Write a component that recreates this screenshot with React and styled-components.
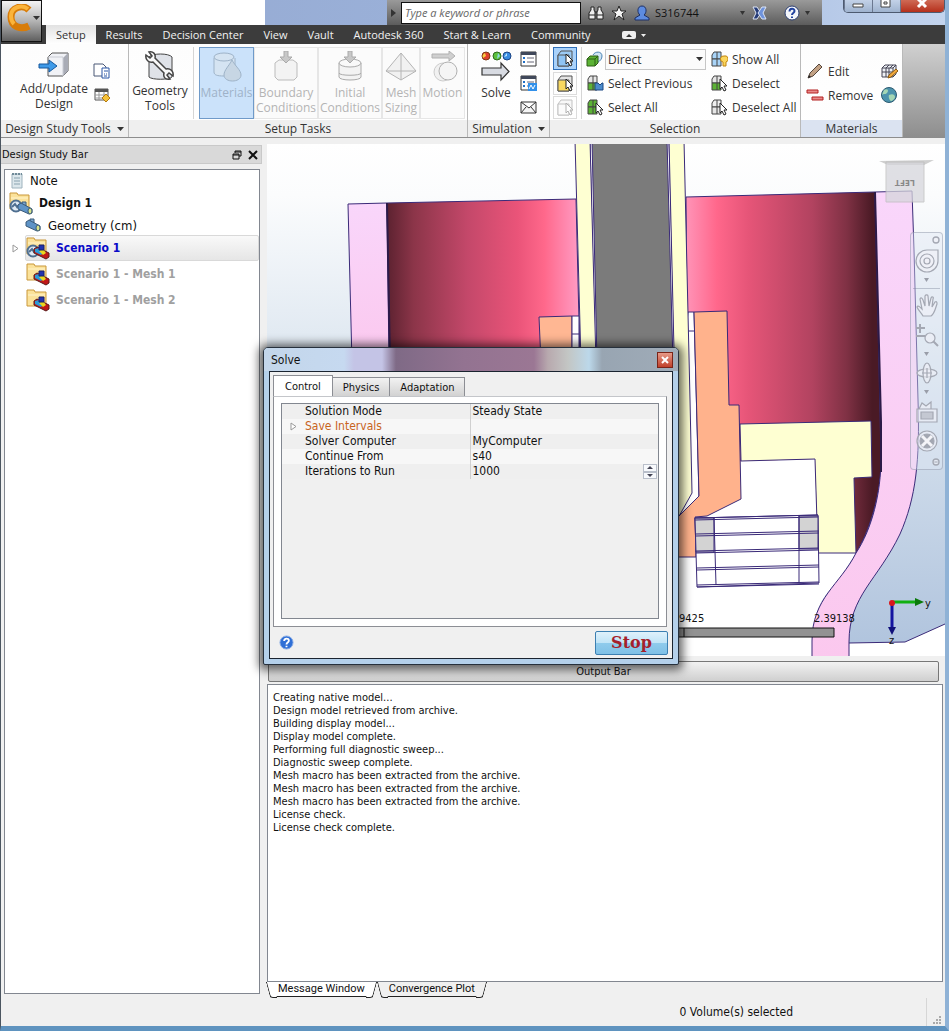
import { useState } from "react";
import styled, { createGlobalStyle } from "styled-components";

const GlobalStyle = createGlobalStyle`
  * {
    box-sizing: border-box;
  }
  body {
    margin: 0;
    background: #f0f0f0;
    font-family: "Open Sans", "Noto Sans", sans-serif;
    font-size: 12px;
    color: #333;
  }
  button, input, select {
    font: inherit;
    color: inherit;
    margin: 0;
    padding: 0;
    border: 0;
    border-radius: 0;
    background: none;
  }
  svg {
    display: block;
    flex: none;
  }
`;

const tahoma = `"DejaVu Sans Condensed", "DejaVu Sans", sans-serif`;

const Window = styled.div`
  position: relative;
  display: flex;
  flex-direction: column;
  min-height: 100vh;
  border-left: 1px solid #4b5560;
  border-right: 4px solid #8fb2d6;
  border-bottom: 5px solid #5f93bf;
  background: #f0f0f0;
`;

/* ---------- title bar and tabs ---------- */

const Header = styled.header`
  display: grid;
  grid-template-columns: 41px 1fr;
  grid-template-rows: 25px 19px;
  background: #3c3c3c;
`;

const AppButton = styled.button`
  grid-row: 1 / 3;
  height: 42px;
  display: flex;
  align-items: center;
  justify-content: space-between;
  padding: 0 2px 6px 5px;
  border: 1px solid #111;
  background: linear-gradient(#f4f4f4, #b4b4b4 50%, #5f5f5f);
`;

const TitleBar = styled.div`
  display: flex;
  background: linear-gradient(90deg, #94a8d0, #9db4dc 60%, #c3d4ee);
`;

const QuickAccess = styled.div`
  flex: 0 0 223px;
  background: #fff;
`;

const TitleDrag = styled.div`
  flex: ${(p) => p.$grow || 0} 0 ${(p) => p.$size}px;
`;

const InfoCenter = styled.div`
  flex: 0 0 435px;
  display: flex;
  align-items: center;
  gap: 7px;
  padding-left: 4px;
  color: #111;
  background: linear-gradient(#9a9a9a, #5c5c5c);
`;

const Search = styled.input`
  width: 180px;
  height: 22px;
  margin-left: -2px;
  padding: 0 3px;
  border: 1px solid #111;
  background: #fff;
  font-size: 11px;
  font-style: italic;
  &::placeholder {
    color: #666;
    opacity: 1;
  }
`;

const InfoButton = styled.button`
  display: flex;
  align-items: center;
  gap: 5px;
  height: 22px;
  margin-right: ${(p) => p.$after || 0}px;
  font-size: 11px;
`;

const WindowControls = styled.div`
  display: flex;
  align-self: flex-start;
  width: 102px;
  height: 13px;
  border: 1px solid #4d5a70;
  border-top: 0;
  border-radius: 0 0 5px 5px;
  overflow: hidden;
`;

const ControlButton = styled.button`
  flex: ${(p) => (p.$close ? 45 : 28)};
  display: flex;
  justify-content: center;
  border-left: 1px solid #6b7890;
  background: ${(p) =>
    p.$close
      ? "linear-gradient(#cf6a55, #b5301c)"
      : "linear-gradient(#c3d2e8, #9fb3cf)"};
`;

const Tabs = styled.nav`
  display: flex;
  align-items: flex-start;
  padding-left: 4px;
  color: #f2f2f2;
  font-size: 11px;
`;

const Tab = styled.button`
  height: 19px;
  padding: 0 10px;
  line-height: 19px;
  ${(p) =>
    p.$active &&
    "background: linear-gradient(#e2e2e2, #fff); color: #333;"}
`;

/* ---------- ribbon ---------- */

const Ribbon = styled.section`
  display: flex;
  height: 94px;
  border-bottom: 1px solid #8d8d8d;
  background: linear-gradient(#d0d0d0, #8e8e8e);
`;

const Group = styled.div`
  flex: 0 0 ${(p) => p.$width}px;
  min-width: 0;
  display: flex;
  flex-direction: column;
  border-right: 1px solid #b9b9b9;
  background: linear-gradient(#fdfdfd, #fff);
`;

const GroupBody = styled.div`
  flex: 1;
  display: flex;
  padding: 3px 0 0 ${(p) => p.$indent || 3}px;
  gap: ${(p) => p.$gap || 0}px;
`;

const GroupTitle = styled.div`
  display: flex;
  align-items: center;
  justify-content: center;
  gap: 6px;
  height: 17px;
  background: ${(p) => (p.$accent ? "#dbe3f1" : "#efefef")};
`;

const BigButton = styled.button`
  flex: none;
  width: ${(p) => p.$width}px;
  height: 72px;
  display: flex;
  flex-direction: column;
  align-items: center;
  gap: 2px;
  padding-top: 3px;
  line-height: 15px;
  border: 1px solid transparent;
  &:disabled {
    color: #b4b4b4;
    border-color: #e6e6e6;
    background: #fbfbfb;
  }
  ${(p) =>
    p.$selected &&
    `&:disabled {
      color: #9fb2c8;
      border-color: #6f9ac9;
      background: #cbe2fa;
    }`}
`;

const IconColumn = styled.div`
  flex: none;
  display: flex;
  flex-direction: column;
  align-items: center;
  justify-content: ${(p) => (p.$spread ? "space-between" : "center")};
  gap: ${(p) => p.$gap || 0}px;
  width: ${(p) => p.$width}px;
  height: 72px;
`;

const IconButton = styled.button`
  display: flex;
  align-items: center;
  justify-content: center;
  width: 24px;
  height: ${(p) => p.$height || 20}px;
  border: 1px solid ${(p) => (p.$active ? "#2f6fb8" : p.$framed ? "#dcdcdc" : "transparent")};
  background: ${(p) => (p.$active ? "#a9d2fb" : "none")};
  &:disabled svg {
    opacity: 0.35;
  }
`;

const Divider = styled.div`
  width: 1px;
  height: 72px;
  background: #d5d5d5;
`;

const CommandColumn = styled.div`
  flex: none;
  display: flex;
  flex-direction: column;
  justify-content: ${(p) => (p.$center ? "center" : "flex-start")};
  width: ${(p) => p.$width}px;
  height: 72px;
`;

const Command = styled.button`
  display: flex;
  align-items: center;
  gap: 4px;
  height: 24px;
  white-space: nowrap;
`;

const SelectRow = styled.div`
  display: flex;
  align-items: center;
  gap: 1px;
  height: 24px;
`;

const SelectBox = styled.div`
  flex: 1;
  display: flex;
  align-items: center;
  height: 21px;
  padding: 0 2px;
  border: 1px solid #c6c6c6;
  background: #fbfbfb;
`;

const Select = styled.select`
  appearance: none;
  flex: 1;
  min-width: 0;
`;

/* ---------- work area ---------- */

const Main = styled.main`
  flex: 1;
  display: flex;
`;

const StudyBar = styled.aside`
  flex: 0 0 261px;
  display: flex;
  flex-direction: column;
  gap: 5px;
  padding: 7px 0 0;
  font-family: ${tahoma};
  color: #111;
`;

const PanelTitle = styled.div`
  display: flex;
  align-items: center;
  height: 19px;
  padding: 0 3px 0 1px;
  gap: 6px;
  border: 1px solid #c9c9c9;
  border-left: 0;
  background: #d9d9d9;
  font-size: 11px;
`;

const PanelName = styled.h2`
  flex: 1;
  margin: 0;
  font-size: 11px;
  font-weight: 400;
`;

const Tree = styled.ul`
  flex: 1;
  margin: 0 2px 4px 3px;
  padding: 0;
  list-style: none;
  border: 1px solid #828790;
  background: #fff;
`;

const TreeRow = styled.li`
  display: flex;
  align-items: center;
  gap: 6px;
  height: ${(p) => p.$height}px;
  padding-left: ${(p) => p.$indent}px;
  font-size: ${(p) => (p.$bold ? 12 : 13)}px;
  font-weight: ${(p) => (p.$bold ? 700 : 400)};
  color: ${(p) => p.$color || "#111"};
`;

const TreeSelection = styled.div`
  flex: 1;
  display: flex;
  align-items: center;
  gap: 6px;
  height: 26px;
  border: 1px solid #d9d9d9;
  border-radius: 2px;
  background: linear-gradient(#f9f9f9, #e6e6e6);
`;

const Workspace = styled.div`
  flex: 1;
  min-width: 0;
  display: flex;
  flex-direction: column;
  padding: 6px 0 0 5px;
`;

const Viewport = styled.div`
  position: relative;
  background: #fff;
`;

const NavBar = styled.div`
  position: absolute;
  top: 88px;
  right: 2px;
  width: 33px;
  height: 238px;
  display: flex;
  flex-direction: column;
  align-items: center;
  justify-content: space-between;
  padding: 3px 2px;
  border: 1px solid rgba(120, 130, 150, 0.4);
  border-radius: 4px;
  background: rgba(225, 232, 245, 0.4);
`;

const NavButton = styled.button`
  display: flex;
  align-self: ${(p) => (p.$corner ? "flex-end" : "center")};
`;

const NavRule = styled.hr`
  width: 100%;
  margin: 0;
  border: 0;
  border-top: 1px solid rgba(120, 130, 150, 0.4);
`;

const OutputTitle = styled.h2`
  display: flex;
  align-items: center;
  justify-content: center;
  height: 21px;
  margin: 5px 6px 2px 1px;
  border: 1px solid #777;
  border-radius: 2px;
  background: linear-gradient(#f2f2f2, #cfcfcf);
  font: 400 11px ${tahoma};
  color: #111;
`;

const Log = styled.div`
  flex: 1;
  margin-right: 2px;
  padding: 6px 5px;
  border: 1px solid #828790;
  background: #fff;
  font-family: ${tahoma};
  font-size: 11px;
  line-height: 13px;
  color: #111;
`;

const OutputTabs = styled.div`
  display: flex;
  gap: 8px;
  height: 16px;
  padding-left: 3px;
`;

const OutputTab = styled.button`
  position: relative;
  height: 15px;
  padding: 0 8px;
  border-bottom: 1px solid #222;
  background: ${(p) => (p.$active ? "#fff" : "#f0f0f0")};
  font-family: Roboto, sans-serif;
  font-size: 11px;
  line-height: 14px;
  color: #111;

  &::before,
  &::after {
    content: "";
    position: absolute;
    top: 0;
    width: 6px;
    height: 15px;
    border-bottom: 1px solid #222;
    background: inherit;
  }
  &::before {
    left: -2px;
    border-left: 1px solid #222;
    border-bottom-left-radius: 3px;
    transform: skewX(15deg);
  }
  &::after {
    right: -2px;
    border-right: 1px solid #222;
    border-bottom-right-radius: 3px;
    transform: skewX(-15deg);
  }
`;

const StatusBar = styled.footer`
  display: flex;
  align-items: center;
  justify-content: flex-end;
  gap: 133px;
  height: 28px;
  padding-right: 2px;
  font-family: ${tahoma};
  color: #111;
`;

const Grip = styled.div`
  align-self: stretch;
  display: flex;
  align-items: flex-end;
  width: 17px;
  padding: 0 0 2px 5px;
  border-left: 1px solid #d6d6d6;
`;

/* ---------- solve dialog ---------- */

const Dialog = styled.div`
  position: absolute;
  top: 347px;
  left: 262px;
  width: 416px;
  border: 1px solid #26303c;
  border-radius: 5px 5px 2px 2px;
  padding: 0 5px 5px;
  background: #b4d0ea;
  box-shadow: 0 1px 10px 4px rgba(0, 0, 0, 0.6);
  font-family: ${tahoma};
  color: #111;
`;

const DialogTitle = styled.div`
  display: flex;
  align-items: center;
  justify-content: space-between;
  height: 23px;
  margin: 0 -5px;
  padding: 0 5px 0 7px;
  border-radius: 4px 4px 0 0;
  background: linear-gradient(
    90deg,
    #c3d6ea 0,
    #c6d9f0 80px,
    #c4c4e6 90px,
    #c4c4e6 118px,
    #7f6a86 132px,
    #937391 200px,
    #9b7794 270px,
    #b8a9ae 284px,
    #c3c6c4 304px,
    #bcd8ea 325px,
    #98a5b2 338px,
    #a0acb8 100%
  );
`;

const DialogClose = styled.button`
  display: flex;
  align-items: center;
  justify-content: center;
  width: 16px;
  height: 16px;
  border: 1px solid #7a2418;
  background: linear-gradient(#e79a88, #c0402a);
`;

const DialogBody = styled.div`
  display: flex;
  flex-direction: column;
  padding: 3px 5px 0 3px;
  border: 1px solid #1a2430;
  background: #f0f0f0;
`;

const DialogTabs = styled.div`
  display: flex;
  align-items: flex-end;
  height: 21px;
  font-size: 11px;
`;

const DialogTab = styled.button`
  height: ${(p) => (p.$active ? 21 : 19)}px;
  padding: 0 ${(p) => (p.$active ? 11 : 10)}px;
  border: 1px solid #8c8e94;
  border-bottom: 0;
  border-left-width: ${(p) => (p.$first ? 1 : 0)}px;
  background: ${(p) =>
    p.$active ? "#fff" : "linear-gradient(#f2f2f2, #d2d2d2)"};
`;

const Pane = styled.div`
  height: 231px;
  padding: 6px 7px 7px;
  border: 1px solid #8c8e94;
  border-top-color: #c4c6ca;
  background: #fff;
`;

const PropertyBox = styled.div`
  height: 100%;
  border: 1px solid #828790;
  background: #f0f0f0;
`;

const PropertyTable = styled.table`
  width: 100%;
  border-collapse: collapse;
  table-layout: fixed;
`;

const PropertyRow = styled.tr`
  height: 15px;
  background: ${(p) => (p.$alt ? "#f7f7f7" : "#efefef")};
`;

const PropertyName = styled.th`
  position: relative;
  width: 188px;
  padding: 0 0 0 23px;
  font-weight: 400;
  line-height: 15px;
  text-align: left;
  border-right: 1px solid #d0d0d0;
  color: ${(p) => (p.$warn ? "#c8641e" : "#111")};
`;

const Expander = styled.button`
  position: absolute;
  top: 3px;
  left: 8px;
`;

const PropertyValue = styled.td`
  padding: 0 1px 0 2px;
  line-height: 15px;
`;

const SpinField = styled.div`
  display: flex;
  justify-content: space-between;
  height: 15px;
`;

const SpinInput = styled.input`
  width: 120px;
  height: 15px;
`;

const SpinButtons = styled.div`
  display: flex;
  flex-direction: column;
  width: 14px;
  height: 15px;
`;

const SpinButton = styled.button`
  flex: 1;
  display: flex;
  align-items: center;
  justify-content: center;
  border: 1px solid #b9bfca;
  background: #f7f9fc;
`;

const DialogFooter = styled.div`
  display: flex;
  align-items: center;
  justify-content: space-between;
  height: 31px;
  margin-right: -1px;
  padding-left: 6px;
`;

const StopButton = styled.button`
  width: 73px;
  height: 24px;
  border: 1px solid #3c7fb1;
  border-radius: 2px;
  background: linear-gradient(#dff1fb, #c0e4f7 50%, #8fcbec 51%, #7fc0e6);
  font-family: "DejaVu Serif", serif;
  font-weight: 700;
  font-size: 16px;
  line-height: 20px;
  color: #a51f2c;
`;

/* ---------- icons ---------- */

const Caret = ({ color = "#333", size = 7 }) => (
  <svg width={size} height="4" viewBox="0 0 8 4" preserveAspectRatio="none">
    <path d="M0 0h8L4 4z" fill={color} />
  </svg>
);

const LogoIcon = () => (
  <svg width="26" height="28" viewBox="0 0 26 28">
    <path
      d="M22 6C16 0 4 3 4 13c0 10 10 13 18 9"
      fill="none"
      stroke="#d87c08"
      strokeWidth="7"
    />
    <path
      d="M21 5C15 0 4 3 4 12c0 4 1 6 3 8"
      fill="none"
      stroke="#fbb43a"
      strokeWidth="4"
    />
  </svg>
);

const BinocularsIcon = () => (
  <svg width="16" height="16" viewBox="0 0 16 16" fill="#eee" stroke="#222">
    <path d="M3 2h3v3l1 2v7H1V8l2-3zM10 2h3v3l2 3v6H9V7l1-2z" />
    <path d="M1 10h6M9 10h6M7 7h2" />
  </svg>
);

const StarIcon = () => (
  <svg width="16" height="16" viewBox="0 0 16 16">
    <path
      d="M8 1l2 5h5l-4 3 2 6-5-4-5 4 2-6-4-3h5z"
      fill="#f5f5f5"
      stroke="#222"
    />
  </svg>
);

const UserIcon = () => (
  <svg width="16" height="16" viewBox="0 0 16 16">
    <path
      d="M8 1c5 0 5 7 2 9l5 3v2H1v-2l5-3C3 8 3 1 8 1z"
      fill="#5d8be0"
      stroke="#1c2f66"
    />
  </svg>
);

const ExchangeIcon = () => (
  <svg width="15" height="14" viewBox="0 0 15 14">
    <path d="M1 1h4l4 6-4 6H1l3-6z" fill="#263c78" stroke="#dde5f5" />
    <path d="M14 1h-4L6 7l4 6h4l-3-6z" fill="#6f93dc" stroke="#dde5f5" />
  </svg>
);

const HelpIcon = ({ blue, size = 16 }) => (
  <svg width={size} height={size} viewBox="0 0 16 16">
    <circle
      cx="8"
      cy="8"
      r="7"
      fill={blue ? "#2f6fd6" : "#f4f6fb"}
      stroke={blue ? "#8fb0e6" : "#2c3e70"}
    />
    <path
      d="M5.500 6.500C5.500 3 10.500 3 10.500 6c0 2-2.500 2-2.500 4M8 11.500v1.500"
      fill="none"
      stroke={blue ? "#fff" : "#2243a0"}
      strokeWidth="2"
    />
  </svg>
);

const AddUpdateIcon = () => (
  <svg width="32" height="28" viewBox="0 0 32 28">
    <path d="M10 6l4-4h16v18l-5 5H10z" fill="#f1f2f6" stroke="#555" />
    <path d="M25 7l5-5v18l-5 5z" fill="#a9acb6" />
    <path d="M10 6h15v19" fill="none" stroke="#c9ccd4" />
    <path
      d="M1 13h10V9l8 6-8 6v-4H1z"
      fill="#3f9ae8"
      stroke="#17599e"
    />
  </svg>
);

const GeometryToolsIcon = () => (
  <svg width="32" height="30" viewBox="0 0 32 30">
    <path
      d="M5 6c3-4 20-4 23 0v20c-3 3-20 3-23 0z"
      stroke="#444"
      fill="#dfe2e8"
    />
    <path
      d="M2 4l4 3 2-2-3-4c4-1 7 2 6 6l11 11c4-1 8 2 7 7l-4-3-2 2 3 4c-5 1-7-2-6-6L9 11C5 12 1 9 2 4z"
      fill="#f8f8f8"
      stroke="#444"
      strokeWidth="1.500"
    />
  </svg>
);

const MaterialsIcon = () => (
  <svg width="32" height="32" viewBox="0 0 32 32">
    <g stroke="#9eb3c8" fill="#d5e4f2">
      <path d="M3 7v14c0 3 3 4 10 4s11-1 11-4V7" />
      <ellipse cx="13" cy="6" rx="10" ry="4" />
      <path d="M21 9c3 6 9 10 9 15 0 8-17 8-17 0 0-5 5-9 8-15z" fill="#c7d6e4" />
    </g>
  </svg>
);

const BoundaryIcon = () => (
  <svg width="32" height="32" viewBox="0 0 32 32">
    <path
      d="M5 12l4-3h14l4 3v14l-3 3H8l-3-3z"
      stroke="#bbb"
      fill="#f3f3f3"
    />
    <path d="M14 0h4v6h4l-6 6-6-6h4z" fill="#c8c8c8" stroke="#aaa" />
  </svg>
);

const InitialIcon = () => (
  <svg width="32" height="32" viewBox="0 0 32 32">
    <path d="M5 12v14c0 4 22 4 22 0V12" stroke="#aaa" fill="#f3f3f3" />
    <ellipse cx="16" cy="12" rx="11" ry="4" stroke="#aaa" fill="#f9f9f9" />
    <path d="M5 22c0 3 22 3 22 0" stroke="#aaa" fill="none" />
    <path d="M14 0h4v6h4l-6 6-6-6h4z" fill="#c8c8c8" stroke="#aaa" />
  </svg>
);

const MeshIcon = () => (
  <svg width="32" height="32" viewBox="0 0 32 32">
    <path
      d="M16 2L1 20l15 9 15-9zM16 2v27M1 20h30"
      stroke="#b4b4b4"
      fill="#f1f1f1"
      strokeLinejoin="round"
    />
  </svg>
);

const MotionIcon = () => (
  <svg width="32" height="32" viewBox="0 0 32 32">
    <path d="M5 3h17V0l6 5-6 5V7H5z" fill="#cfcfcf" stroke="#b0b0b0" />
    <circle cx="16" cy="21" r="9" fill="#f1f1f1" stroke="#ccc" />
    <circle cx="21" cy="20" r="9" fill="#f5f5f5" stroke="#b0b0b0" />
  </svg>
);

const SolveIcon = () => (
  <svg width="32" height="32" viewBox="0 0 32 32">
    <circle cx="6" cy="5" r="4" fill="#e0402c" stroke="#7a3a10" />
    <circle cx="17" cy="5" r="4" fill="#5cc13c" stroke="#2c6a1c" />
    <circle cx="27" cy="5" r="4" fill="#3a8ce0" stroke="#1c4484" />
    <path d="M5 2a4 4 0 0 0-2 5l3-2z" fill="#f8d040" />
    <path d="M18 2l2 3-3 3z" fill="#8fd8e8" />
    <path d="M27 2l-3 4 3-1z" fill="#bfe4fb" />
    <path
      d="M2 17h19v-5l8 8.500-8 8.500v-5H2z"
      fill="#d8dbe2"
      stroke="#333"
      strokeWidth="1.200"
    />
  </svg>
);

const DocIcon = ({ variant }) => (
  <svg width="18" height="18" viewBox="0 0 18 18">
    {variant === "page" && (
      <g stroke="#4a5876" fill="#fff">
        <path d="M1 2h9l3 3v9H1z" />
        <path d="M9 6h7v10H9z" stroke="#2b57a5" />
        <path d="M11 9h4M11 12h1M13 12h1M11 14h3" stroke="#2b57a5" />
      </g>
    )}
    {variant === "table" && (
      <g>
        <path d="M2 3h13v11H2z" fill="#fff" stroke="#555" />
        <path d="M2 3h13v3H2z" fill="#555" />
        <path d="M2 9h13M2 12h13M6 6v8M11 6v8" stroke="#999" />
        <path d="M13 8l4 4-4 4-4-4z" fill="#f6c33a" stroke="#b37a10" />
      </g>
    )}
    {(variant === "list" || variant === "chart") && (
      <g>
        <path d="M1 2h15v14H1z" fill="#fff" stroke="#333" />
        <path d="M1 2h15v3H1z" fill="#40485a" />
        <path d="M3 8h2M3 12h2" stroke="#2070c8" strokeWidth="2" />
        <path d="M7 8h7M7 12h7" stroke="#667" />
        {variant === "chart" && (
          <>
            <path d="M8 9h9v8H8z" fill="#3190ea" />
            <path d="M9 15l2-4 2 4 2-4" stroke="#fff" fill="none" />
          </>
        )}
      </g>
    )}
    {variant === "mail" && (
      <path d="M1 4h15v11H1zM1 4l8 6 7-6M1 15l5-6M16 15l-5-6" fill="#f5f5f5" stroke="#333" />
    )}
  </svg>
);

const Cursor = () => (
  <path d="M10 5v10l2-2 2 4 2-1-2-4h3z" fill="#fff" stroke="#222" />
);

const CubeIcon = ({ top, front }) => (
  <svg width="19" height="19" viewBox="0 0 19 19">
    <path d="M2 6l3-4h11v11l-3 4H2z" fill={top} stroke="#555" />
    <path d="M2 6h11v11H2z" fill={front} stroke="#555" />
    <Cursor />
  </svg>
);

const SplitIcon = ({ top, bottom, kind }) => (
  <svg width="18" height="18" viewBox="0 0 18 18">
    <path d="M2 5l2-3h7v7H2z" fill={top} stroke="#444" />
    <path d="M2 9h9v7H2zM7 2v14" fill={bottom} stroke="#444" />
    {kind === "pointer" && <Cursor />}
    {kind === "bulb" && (
      <path d="M14 6a3 3 0 0 1 2 6v4h-3v-4a3 3 0 0 1 1-6z" fill="#fbd65c" stroke="#c08410" />
    )}
    {kind === "back" && (
      <path d="M9 9h3l2 2 2-2h1v7H9z" fill="#4c8ccc" stroke="#1c4884" />
    )}
  </svg>
);

const DirectIcon = () => (
  <svg width="18" height="18" viewBox="0 0 18 18">
    <path d="M7 5c2-4 9-4 9 1 0 3-2 5-4 6" fill="#cfe4f4" stroke="#4b84b4" />
    <path d="M1 9l3-3h8v7l-3 3H1z" fill="#5cb335" stroke="#2c5f16" />
    <path d="M1 9h8v7M9 9l3-3" fill="none" stroke="#2c5f16" />
  </svg>
);

const EditIcon = () => (
  <svg width="18" height="18" viewBox="0 0 18 18">
    <path d="M2 16l2-5L13 2l3 3-9 9z" fill="#c2a184" stroke="#55463c" />
    <path d="M2 16l1-3 2 2z" fill="#222" />
  </svg>
);

const RemoveIcon = () => (
  <svg width="18" height="18" viewBox="0 0 18 18" fill="#e98a8a" stroke="#b32020">
    <path d="M1 4h11v3H1zM6 11h11v3H6z" />
  </svg>
);

const GridPencilIcon = () => (
  <svg width="18" height="18" viewBox="0 0 18 18">
    <path d="M2 6l3-3h11v9l-3 3H2zM2 6h11v9M6 6v9M9 6v9M2 10h11M13 6l3-3M6 6l3-3M10 6l3-3" fill="#eef1f6" stroke="#445" />
    <path d="M8 16l1-3 7-6 2 2-7 6z" fill="#f3a93c" stroke="#8a5a10" />
  </svg>
);

const GlobeIcon = () => (
  <svg width="18" height="18" viewBox="0 0 18 18">
    <circle cx="9" cy="9" r="7.500" fill="#4c93ad" stroke="#2c5a70" />
    <path d="M4 4c4-2 5 1 3 3s-3 0-5 2zM9 9c4-2 6 0 6 2s-3 4-4 4-3-4-2-6z" fill="#a4d6b4" />
  </svg>
);

const NoteIcon = () => (
  <svg width="14" height="18" viewBox="0 0 14 18">
    <path d="M2 2h10v14H2z" fill="#dce7ec" stroke="#9fb3be" />
    <path d="M2 2h10" stroke="#6f8a98" strokeDasharray="2 1" strokeWidth="2" />
    <path d="M4 6h6M4 9h6M4 12h6" stroke="#8aa3b0" />
  </svg>
);

const Pipe = ({ x = 0, y = 0 }) => (
  <g transform={`translate(${x} ${y})`} stroke="#3a5a78">
    <path d="M5 1h4v5H5z" fill="#7ba8d2" />
    <path d="M1 4l3-2 11 6v4l-3 1L1 8z" fill="#5e93c6" />
    <ellipse cx="13" cy="10" rx="2" ry="3" fill="#d9e48c" />
  </g>
);

const HotPipe = ({ x = 0, y = 0 }) => (
  <g transform={`translate(${x} ${y})`}>
    <path d="M1 4l3-2 12 6v4l-3 2L1 8z" fill="#c01818" stroke="#5a1c1c" />
    <path d="M2 4l4-1 5 4-3 3-6-3z" fill="#2a9ad8" />
    <path d="M6 6l4-2 3 4-3 2z" fill="#e8d820" />
    <path d="M6 0h5v5H6z" fill="#2233b0" stroke="#182068" />
  </g>
);

const FolderIcon = ({ hot, sync }) => (
  <svg width="24" height="24" viewBox="0 0 24 24">
    <path d="M1 5V2h7l1 2h11v14H1z" fill="#fbe29a" stroke="#c9973a" />
    <path d="M2 7h17" stroke="#fff4cc" />
    {sync && (
      <g fill="none" stroke="#4f6f90" strokeWidth="2">
        <circle cx="7" cy="15" r="5.500" fill="#dfeaf5" />
        <path d="M3 16l3-3 2 3 3-3" />
      </g>
    )}
    {hot ? <HotPipe x={7} y={9} /> : <Pipe x={8} y={10} />}
  </svg>
);

const Triangle = () => (
  <svg width="7" height="9" viewBox="0 0 7 9">
    <path d="M1 1l5 3.500L1 8z" fill="#fff" stroke="#999" />
  </svg>
);

/* ---------- model view ---------- */

const ModelView = () => (
  <svg width="100%" viewBox="267 144 678 512" role="img" aria-label="Model section view">
    <defs>
      <linearGradient id="sky" x1="0" y1="0" x2="0" y2="1">
        <stop offset="0" stopColor="#fff" />
        <stop offset="0.1" stopColor="#fbfcfd" />
        <stop offset="0.4" stopColor="#dfe8f1" />
        <stop offset="1" stopColor="#afc3dd" />
      </linearGradient>
      <linearGradient id="boreLeft" gradientUnits="userSpaceOnUse" x1="387" x2="579" y1="0" y2="0">
        <stop offset="0" stopColor="#5c2230" />
        <stop offset="0.14" stopColor="#8c3549" />
        <stop offset="0.42" stopColor="#c4486a" />
        <stop offset="0.68" stopColor="#ea5479" />
        <stop offset="0.82" stopColor="#ff688b" />
        <stop offset="1" stopColor="#ff9cc4" />
      </linearGradient>
      <linearGradient id="boreRight" gradientUnits="userSpaceOnUse" x1="686" x2="880" y1="0" y2="0">
        <stop offset="0" stopColor="#ff94b8" />
        <stop offset="0.16" stopColor="#ff678b" />
        <stop offset="0.32" stopColor="#e65578" />
        <stop offset="0.65" stopColor="#b24360" />
        <stop offset="0.83" stopColor="#7f3144" />
        <stop offset="0.96" stopColor="#4a1a25" />
      </linearGradient>
      <linearGradient id="wall" x1="0" y1="0" x2="0" y2="1">
        <stop offset="0" stopColor="#f9d6fb" />
        <stop offset="1" stopColor="#fbc8ee" />
      </linearGradient>
    </defs>

    <path d="M267 144h678v512H267z" fill="url(#sky)" />
    <path d="M849 643l56-1 40-18v32h-96z" fill="#fff" />

    <g stroke="#3a2a78" strokeWidth="1">
      <path d="M348 204l39-1 2 160h-37z" fill="url(#wall)" />
      <path d="M387 203l189-4 4 164H390z" fill="url(#boreLeft)" />
      <path d="M539 317l33-1v47h-31z" fill="#ffb793" />
      <path d="M572 316h7v47h-7zM572 334h7" fill="#fff" />
      <path d="M590 140h79l6 223h-80z" fill="#fff" />
      <path d="M592 140h75l6 223h-76z" fill="#7b7b7b" />
      <path d="M575 140h15l6 223h-15z" fill="#feffd2" />

      <path d="M818 553h38l-20 31c-16 14-24 30-24 72H660V553z" fill="#fff" stroke="none" />
      <path d="M686 197l189-5 6 208v72c-3 30-12 60-25 81l-100-50-68 0z" fill="url(#boreRight)" />
      <path d="M741 461l74-2 3 94-20 33H690l5-76z" fill="#fff" stroke="none" />
      <path d="M688 312h6l5 184-19 20-2-100z" fill="#fff" />
      <path d="M688 331h6" />
      <path d="M669 140h15l6 260 2 93-14 25z" fill="#feffd2" />
      <path
        d="M694 312l33-1 2 94h10l2 94-34 17-12 1 1 40h-20v-38l23-23z"
        fill="#ffb28c"
      />
      <path
        d="M740 424l131-3 1 56-18 1 2 75h-38l-3-94-74 2z"
        fill="#feffd2"
      />
      <path
        d="M875 192l37-1 2 59 4 150c2 60-2 98-18 134-22 46-51 62-51 108v18h-37v-19c0-43 28-56 44-88 16-24 25-60 25-95z"
        fill="url(#wall)"
      />
      <path d="M849 643l56-1 40-18" fill="none" />

      <path d="M695 518l123-3 1 68-122 4z" fill="#fff" />
      <path d="M695 518h19v34h-18zM799 516h19v33h-19z" fill="#d3d3d3" />
      <path
        d="M695 518l123-3M695 520l123-3M696 534l123-3M696 536l123-3M696 551l123-3M696 553l123-3M697 568l122-3M697 570l122-3M697 585l122-3M697 587l122-3M714 518l2 67M799 516v67"
        fill="none"
      />
    </g>
    <path d="M387 203l3 160M875 192l6 230v50" stroke="#2c1a48" strokeWidth="2" fill="none" />

    <path d="M670 628h164v9H670zM684 628v9" fill="#929292" stroke="#111" />
    <g fontFamily={tahoma} fontSize="11" fill="#111">
      <text x="679" y="622">9425</text>
      <text x="814" y="622">2.39138</text>
      <text x="925" y="607">y</text>
      <text x="889" y="644">z</text>
    </g>
    <path d="M893 602h24" stroke="#11b011" strokeWidth="3" />
    <path d="M915 598l9 4-9 4z" fill="#0a7a0a" />
    <path d="M892 604v24" stroke="#1414a0" strokeWidth="3" />
    <path d="M888 627h8l-4 8z" fill="#10107a" />
    <circle cx="892" cy="603" r="3" fill="#d8181c" />

    <path d="M879 161l55-1-10 5h-36z" fill="#bbb" opacity="0.7" />
    <path d="M886 162h38v40h-38z" fill="#d6d6dc" stroke="#bbb" opacity="0.75" />
    <text
      transform="translate(915 180) rotate(180)"
      fontSize="9"
      fontWeight="700"
      fill="#888"
    >
      LEFT
    </text>
  </svg>
);

const NavGlyph = ({ children, size = 24 }) => (
  <svg
    width={size}
    height={size}
    viewBox="0 0 24 24"
    fill="rgba(240,240,246,0.6)"
    stroke="#a4a8b3"
    strokeWidth="1.200"
  >
    {children}
  </svg>
);

const NavigationBar = () => (
  <NavBar>
    <NavButton $corner aria-label="Close navigation bar">
      <NavGlyph size={8}>
        <circle cx="12" cy="12" r="9" strokeWidth="4" />
      </NavGlyph>
    </NavButton>
    <NavButton aria-label="Steering wheel">
      <NavGlyph>
        <path d="M12 1h11v11A11 11 0 1 1 12 1z" />
        <circle cx="12" cy="12" r="7" />
        <circle cx="12" cy="12" r="3" />
      </NavGlyph>
    </NavButton>
    <Caret color="#999da8" size={5} />
    <NavRule />
    <NavButton aria-label="Pan">
      <NavGlyph>
        <path d="M8 22c-2-4-5-6-6-9 1-2 3 0 5 2L5 5c1-2 2-1 3 1l2 6V2c1-2 3-1 3 0l1 10 2-8c1-2 3-1 2 1l-1 8 3-5c2-1 2 1 2 2-2 5-2 9-6 12z" />
      </NavGlyph>
    </NavButton>
    <NavButton aria-label="Zoom">
      <NavGlyph>
        <path d="M1 5h9M5 1v9M1 13h9M18 18l5 5" strokeWidth="2" />
        <circle cx="15" cy="15" r="5" />
      </NavGlyph>
    </NavButton>
    <Caret color="#999da8" size={5} />
    <NavButton aria-label="Orbit">
      <NavGlyph>
        <ellipse cx="12" cy="12" rx="10" ry="4" />
        <ellipse cx="12" cy="12" rx="4" ry="10" />
        <path d="M12 7v10M7 12h10" />
      </NavGlyph>
    </NavButton>
    <Caret color="#999da8" size={5} />
    <NavButton aria-label="Look at">
      <NavGlyph>
        <path d="M2 9h20v13H2zM4 9l3-6 4 3 5-4v7" />
        <path d="M6 12h12v7H6z" fill="#c4c8d2" />
      </NavGlyph>
    </NavButton>
    <NavButton aria-label="Center">
      <NavGlyph>
        <circle cx="12" cy="12" r="10" />
        <circle cx="12" cy="12" r="7" fill="#a3a7b2" />
        <path d="M7 7l10 10M17 7L7 17" stroke="#f4f4f8" strokeWidth="3" />
      </NavGlyph>
    </NavButton>
    <NavButton $corner aria-label="Customize">
      <NavGlyph size={8}>
        <circle cx="12" cy="12" r="9" strokeWidth="4" />
        <path d="M7 12h10" strokeWidth="3" />
      </NavGlyph>
    </NavButton>
  </NavBar>
);

/* ---------- page ---------- */

const ribbonTabs = [
  "Setup",
  "Results",
  "Decision Center",
  "View",
  "Vault",
  "Autodesk 360",
  "Start & Learn",
  "Community",
];

const messages = [
  "Creating native model...",
  "Design model retrieved from archive.",
  "Building display model...",
  "Display model complete.",
  "Performing full diagnostic sweep...",
  "Diagnostic sweep complete.",
  "Mesh macro has been extracted from the archive.",
  "Mesh macro has been extracted from the archive.",
  "Mesh macro has been extracted from the archive.",
  "License check.",
  "License check complete.",
];

const SolveDialog = () => {
  const [tab, setTab] = useState("Control");
  const [iterations, setIterations] = useState(1000);

  return (
    <Dialog role="dialog" aria-label="Solve">
      <DialogTitle>
        <span>Solve</span>
        <DialogClose aria-label="Close">
          <svg width="8" height="8" viewBox="0 0 8 8">
            <path d="M1 1l6 6M7 1L1 7" stroke="#fff" strokeWidth="2" />
          </svg>
        </DialogClose>
      </DialogTitle>
      <DialogBody>
        <DialogTabs>
          {["Control", "Physics", "Adaptation"].map((name, i) => (
            <DialogTab
              key={name}
              $first={i === 0}
              $active={tab === name}
              onClick={() => setTab(name)}
            >
              {name}
            </DialogTab>
          ))}
        </DialogTabs>
        <Pane>
          <PropertyBox>
            <PropertyTable>
              <tbody>
                <PropertyRow>
                  <PropertyName>Solution Mode</PropertyName>
                  <PropertyValue>Steady State</PropertyValue>
                </PropertyRow>
                <PropertyRow $alt>
                  <PropertyName $warn>
                    <Expander aria-label="Expand Save Intervals">
                      <Triangle />
                    </Expander>
                    Save Intervals
                  </PropertyName>
                  <PropertyValue />
                </PropertyRow>
                <PropertyRow>
                  <PropertyName>Solver Computer</PropertyName>
                  <PropertyValue>MyComputer</PropertyValue>
                </PropertyRow>
                <PropertyRow $alt>
                  <PropertyName>Continue From</PropertyName>
                  <PropertyValue>s40</PropertyValue>
                </PropertyRow>
                <PropertyRow>
                  <PropertyName>
                    <label htmlFor="iterations">Iterations to Run</label>
                  </PropertyName>
                  <PropertyValue>
                    <SpinField>
                      <SpinInput
                        id="iterations"
                        value={iterations}
                        onChange={(e) => setIterations(e.target.value)}
                      />
                      <SpinButtons>
                        <SpinButton
                          aria-label="Increase"
                          onClick={() => setIterations(Number(iterations) + 1)}
                        >
                          <svg width="6" height="3" viewBox="0 0 6 3">
                            <path d="M0 3h6L3 0z" fill="#445" />
                          </svg>
                        </SpinButton>
                        <SpinButton
                          aria-label="Decrease"
                          onClick={() => setIterations(Number(iterations) - 1)}
                        >
                          <svg width="6" height="3" viewBox="0 0 6 3">
                            <path d="M0 0h6L3 3z" fill="#445" />
                          </svg>
                        </SpinButton>
                      </SpinButtons>
                    </SpinField>
                  </PropertyValue>
                </PropertyRow>
              </tbody>
            </PropertyTable>
          </PropertyBox>
        </Pane>
        <DialogFooter>
          <button aria-label="Help">
            <HelpIcon blue size={15} />
          </button>
          <StopButton>Stop</StopButton>
        </DialogFooter>
      </DialogBody>
    </Dialog>
  );
};

const App = () => {
  const [tab, setTab] = useState("Setup");
  const [outputTab, setOutputTab] = useState("Message Window");

  return (
    <Window>
      <GlobalStyle />
      <Header>
        <AppButton aria-label="Application menu">
          <LogoIcon />
          <Caret />
        </AppButton>
        <TitleBar>
          <QuickAccess />
          <TitleDrag $size={122} />
          <InfoCenter>
            <svg width="5" height="8" viewBox="0 0 5 8">
              <path d="M0 0l5 4-5 4z" fill="#333" />
            </svg>
            <Search
              aria-label="Search"
              placeholder="Type a keyword or phrase"
            />
            <InfoButton aria-label="Find">
              <BinocularsIcon />
            </InfoButton>
            <InfoButton aria-label="Favorites">
              <StarIcon />
            </InfoButton>
            <InfoButton $after={34}>
              <UserIcon />
              S316744
            </InfoButton>
            <Caret size={5} />
            <InfoButton aria-label="Exchange apps" $after={10}>
              <ExchangeIcon />
            </InfoButton>
            <InfoButton aria-label="Help">
              <HelpIcon />
              <Caret size={5} />
            </InfoButton>
          </InfoCenter>
          <TitleDrag $size={10} $grow={1} />
          <WindowControls>
            <ControlButton aria-label="Minimize">
              <svg width="12" height="10" viewBox="0 0 12 10">
                <path d="M1 4h10v3H1z" fill="#fff" stroke="#444" />
              </svg>
            </ControlButton>
            <ControlButton aria-label="Restore">
              <svg width="12" height="10" viewBox="0 0 12 10">
                <path d="M1 -2h9v9H1zM4 2h3v2H4z" fill="#fff" stroke="#444" />
              </svg>
            </ControlButton>
            <ControlButton $close aria-label="Close window">
              <svg width="12" height="10" viewBox="0 0 12 10">
                <path d="M2 -1l8 8M10 -1L2 7" stroke="#fff" strokeWidth="3" />
              </svg>
            </ControlButton>
          </WindowControls>
        </TitleBar>
        <Tabs>
          {ribbonTabs.map((name) => (
            <Tab
              key={name}
              $active={name === tab}
              onClick={() => setTab(name)}
            >
              {name}
            </Tab>
          ))}
          <Tab aria-label="Minimize ribbon">
            <svg width="36" height="19" viewBox="0 0 36 19">
              <rect x="11" y="6" width="14" height="8" rx="2" fill="#eee" />
              <path d="M15 12h6l-3-3z" fill="#333" />
              <path d="M30 9h5l-2.500 3z" fill="#eee" />
            </svg>
          </Tab>
        </Tabs>
      </Header>

      <Ribbon>
        <Group $width={128}>
          <GroupBody $indent={14}>
            <BigButton $width={78}>
              <AddUpdateIcon />
              Add/Update Design
            </BigButton>
            <IconColumn $width={18} $gap={4}>
              <IconButton aria-label="Design notes">
                <DocIcon variant="page" />
              </IconButton>
              <IconButton aria-label="Design table">
                <DocIcon variant="table" />
              </IconButton>
            </IconColumn>
          </GroupBody>
          <GroupTitle>
            Design Study Tools <Caret />
          </GroupTitle>
        </Group>

        <Group $width={339}>
          <GroupBody>
            <BigButton $width={56}>
              <GeometryToolsIcon />
              Geometry Tools
            </BigButton>
            <IconColumn $width={11}>
              <Divider />
            </IconColumn>
            <BigButton $width={55} disabled $selected>
              <MaterialsIcon />
              Materials
            </BigButton>
            <BigButton $width={64} disabled>
              <BoundaryIcon />
              Boundary Conditions
            </BigButton>
            <BigButton $width={64} disabled>
              <InitialIcon />
              Initial Conditions
            </BigButton>
            <BigButton $width={38} disabled>
              <MeshIcon />
              Mesh Sizing
            </BigButton>
            <BigButton $width={45} disabled>
              <MotionIcon />
              Motion
            </BigButton>
          </GroupBody>
          <GroupTitle>Setup Tasks</GroupTitle>
        </Group>

        <Group $width={82}>
          <GroupBody>
            <BigButton $width={50}>
              <SolveIcon />
              Solve
            </BigButton>
            <IconColumn $width={16} $spread>
              <IconButton aria-label="Job list" $height={24}>
                <DocIcon variant="list" />
              </IconButton>
              <IconButton aria-label="Solver monitor" $height={24}>
                <DocIcon variant="chart" />
              </IconButton>
              <IconButton aria-label="Notifications" $height={24}>
                <DocIcon variant="mail" />
              </IconButton>
            </IconColumn>
          </GroupBody>
          <GroupTitle>
            Simulation <Caret />
          </GroupTitle>
        </Group>

        <Group $width={251}>
          <GroupBody $gap={4}>
            <IconColumn $width={24} $spread>
              <IconButton aria-label="Select volumes" $height={23} $active>
                <CubeIcon top="#9ccbf5" front="#8fc4f4" />
              </IconButton>
              <IconButton aria-label="Select surfaces" $height={23} $framed>
                <CubeIcon top="#e4e4e4" front="#f8d860" />
              </IconButton>
              <IconButton aria-label="Select edges" $height={23} $framed disabled>
                <CubeIcon top="#eee" front="#f6f6f6" />
              </IconButton>
            </IconColumn>
            <Divider />
            <CommandColumn $width={120}>
              <SelectRow>
                <DirectIcon />
                <SelectBox>
                  <Select aria-label="Selection mode">
                    <option>Direct</option>
                  </Select>
                  <Caret />
                </SelectBox>
              </SelectRow>
              <Command>
                <SplitIcon top="#e6e6e6" bottom="#5cb335" kind="back" />
                Select Previous
              </Command>
              <Command>
                <SplitIcon top="#5cb335" bottom="#5cb335" kind="pointer" />
                Select All
              </Command>
            </CommandColumn>
            <CommandColumn $width={88}>
              <Command>
                <SplitIcon top="#a9d4f8" bottom="#a9d4f8" kind="bulb" />
                Show All
              </Command>
              <Command>
                <SplitIcon top="#e6e6e6" bottom="#5cb335" kind="pointer" />
                Deselect
              </Command>
              <Command>
                <SplitIcon top="#eee" bottom="#e6e6e6" kind="pointer" />
                Deselect All
              </Command>
            </CommandColumn>
          </GroupBody>
          <GroupTitle>Selection</GroupTitle>
        </Group>

        <Group $width={102}>
          <GroupBody $indent={5}>
            <CommandColumn $width={71} $center>
              <Command>
                <EditIcon />
                Edit
              </Command>
              <Command>
                <RemoveIcon />
                Remove
              </Command>
            </CommandColumn>
            <IconColumn $width={24} $gap={4}>
              <IconButton aria-label="Material grid">
                <GridPencilIcon />
              </IconButton>
              <IconButton aria-label="Environment">
                <GlobeIcon />
              </IconButton>
            </IconColumn>
          </GroupBody>
          <GroupTitle $accent>Materials</GroupTitle>
        </Group>
      </Ribbon>

      <Main>
        <StudyBar>
          <PanelTitle>
            <PanelName>Design Study Bar</PanelName>
            <button aria-label="Float panel">
              <svg width="10" height="10" viewBox="0 0 10 10">
                <path
                  d="M3 3V1h6v5H7M1 4h6v5H1zM1 5h6M3 2h6"
                  fill="none"
                  stroke="#111"
                />
              </svg>
            </button>
            <button aria-label="Close panel">
              <svg width="10" height="10" viewBox="0 0 10 10">
                <path d="M1 1l8 8M9 1L1 9" stroke="#111" strokeWidth="2" />
              </svg>
            </button>
          </PanelTitle>
          <Tree>
            <TreeRow $height={21} $indent={5}>
              <NoteIcon />
              Note
            </TreeRow>
            <TreeRow $height={24} $indent={4} $bold>
              <FolderIcon sync />
              Design 1
            </TreeRow>
            <TreeRow $height={20} $indent={20}>
              <svg width="17" height="15" viewBox="0 0 17 15">
                <Pipe />
              </svg>
              Geometry (cm)
            </TreeRow>
            <TreeRow $height={26} $indent={7} $bold $color="#0a0ac8">
              <Triangle />
              <TreeSelection>
                <FolderIcon hot sync />
                Scenario 1
              </TreeSelection>
            </TreeRow>
            <TreeRow $height={26} $indent={21} $bold $color="#a0a0a0">
              <FolderIcon hot />
              Scenario 1 - Mesh 1
            </TreeRow>
            <TreeRow $height={26} $indent={21} $bold $color="#a0a0a0">
              <FolderIcon hot />
              Scenario 1 - Mesh 2
            </TreeRow>
          </Tree>
        </StudyBar>

        <Workspace>
          <Viewport>
            <ModelView />
            <NavigationBar />
          </Viewport>
          <OutputTitle>Output Bar</OutputTitle>
          <Log>
            {messages.map((message, i) => (
              <div key={i}>{message}</div>
            ))}
          </Log>
          <OutputTabs>
            {["Message Window", "Convergence Plot"].map((name) => (
              <OutputTab
                key={name}
                $active={name === outputTab}
                onClick={() => setOutputTab(name)}
              >
                {name}
              </OutputTab>
            ))}
          </OutputTabs>
        </Workspace>
      </Main>

      <StatusBar>
        <span>0 Volume(s) selected</span>
        <Grip>
          <svg width="9" height="9" viewBox="0 0 9 9" fill="#aaa">
            <path d="M7 1h2v2H7zM4 4h2v2H4zM7 4h2v2H7zM1 7h2v2H1zM4 7h2v2H4zM7 7h2v2H7z" />
          </svg>
        </Grip>
      </StatusBar>

      <SolveDialog />
    </Window>
  );
};

export default App;
